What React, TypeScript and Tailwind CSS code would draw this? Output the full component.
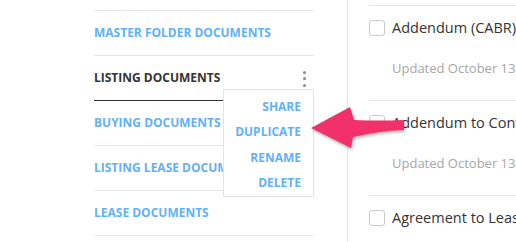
import React from "react";

const font = { fontFamily: '"Open Sans", "Liberation Sans", sans-serif' };

const leftRows = [
  { label: "MASTER FOLDER DOCUMENTS", active: false },
  { label: "LISTING DOCUMENTS", active: true },
  { label: "BUYING DOCUMENTS", active: false },
  { label: "LISTING LEASE DOCUMENTS", active: false },
  { label: "LEASE DOCUMENTS", active: false },
];

const docs = [
  { title: "Addendum (CABR)", updated: "Updated October 13" },
  { title: "Addendum to Contract", updated: "Updated October 13" },
  { title: "Agreement to Lease", updated: "Updated October 13" },
];

export default function App() {
  return (
    <div
      className="relative flex w-[516px] h-[242px] overflow-hidden bg-white"
      style={font}
    >
      {/* Left folder list */}
      <div className="pl-[94px] pt-[10px] w-[314px] shrink-0">
        {leftRows.map((r, i) => (
          <div
            key={r.label}
            className={`h-[45px] border-t flex items-center justify-between whitespace-nowrap overflow-hidden ${
              i === 2 ? "border-[#333333]" : "border-[#e6e6e6]"
            }`}
          >
            <span
              className={`text-[12px] font-bold ${
                r.active ? "text-[#333333]" : "text-[#62b1f6]"
              }`}
            >
              {r.label}
            </span>
            {r.active && (
              <div className="flex flex-col gap-[3.5px] pr-[8px] pt-[1px]">
                <span className="block w-[3px] h-[3px] rounded-full bg-[#8a8a8a]" />
                <span className="block w-[3px] h-[3px] rounded-full bg-[#8a8a8a]" />
                <span className="block w-[3px] h-[3px] rounded-full bg-[#8a8a8a]" />
              </div>
            )}
          </div>
        ))}
        <div className="border-t border-[#e6e6e6]" />
      </div>

      {/* Spacer and vertical divider */}
      <div className="w-[33px] shrink-0" />
      <div className="w-px shrink-0 bg-[#e3e3e3]" />

      {/* Right document list */}
      <div className="relative z-20 pl-[21px] pt-[5px] flex-1 min-w-0">
        {docs.map((d) => (
          <div
            key={d.title}
            className="h-[95px] border-t border-[#e6e6e6] pt-[14px] whitespace-nowrap"
          >
            <div className="flex items-start gap-[7px]">
              <span className="block w-[16px] h-[16px] shrink-0 rounded-[3px] border border-[#c9c9c9] bg-white" />
              <span className="relative z-40 text-[14.5px] leading-[15px] text-[#333333]">
                {d.title}
              </span>
            </div>
            <div className="pl-[23px] mt-[23px] text-[13px] leading-[18px] text-[#a6a6a6]">
              {d.updated}
            </div>
          </div>
        ))}
      </div>

      {/* Context menu */}
      <div className="absolute left-[223px] top-[89px] w-[91px] h-[108px] bg-white border border-[#e3e3e3] z-10 flex flex-col items-end pr-[12px] pt-[4px]">
        {["SHARE", "DUPLICATE", "RENAME", "DELETE"].map((t) => (
          <div
            key={t}
            className="h-[26.5px] flex items-center text-[12px] font-bold text-[#62b1f6]"
          >
            {t}
          </div>
        ))}
      </div>

      {/* Annotation arrow */}
      <svg
        className="absolute left-[300px] top-[95px] z-30"
        width="120"
        height="65"
        viewBox="0 0 120 65"
        style={{ filter: "drop-shadow(1px 2px 1.5px rgba(0,0,0,0.3))" }}
      >
        <path
          d="M11 33 L50 12 L54 25 Q78 26 104 25 L104 35 Q78 36 53 42 L51 53 Z"
          fill="#f2316b"
        />
      </svg>
    </div>
  );
}
